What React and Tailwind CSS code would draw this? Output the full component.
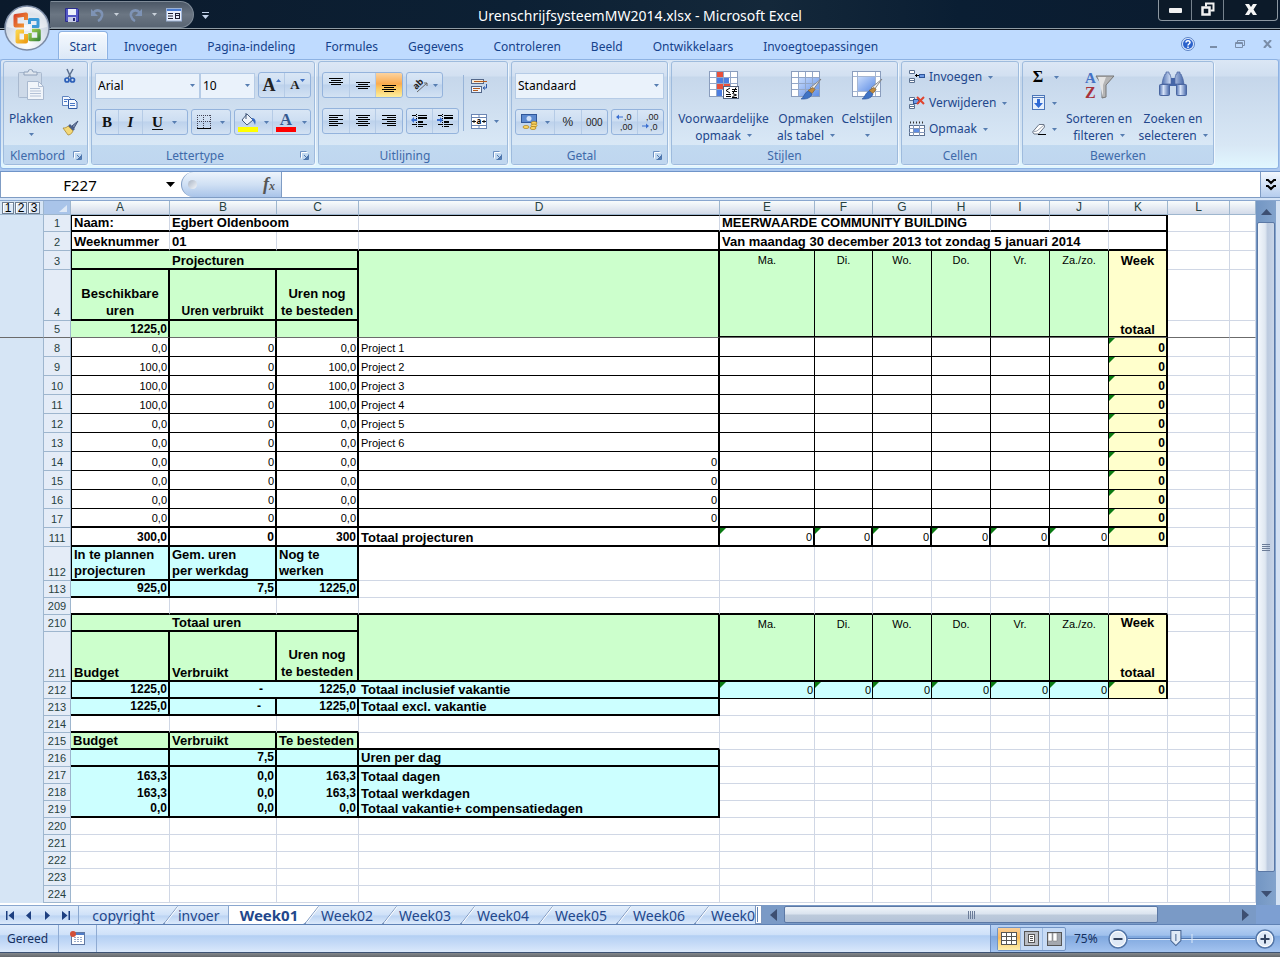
import React from 'react';

/* ---------- small shared pieces ---------- */

const Arrow = ({ className = 'text-[#567db1]' }) => (
  <svg width="5" height="3" viewBox="0 0 5 3" className={'shrink-0 ' + className} aria-hidden="true">
    <path d="M0 0h5L2.500 3z" fill="currentColor" />
  </svg>
);

const Launcher = ({ label }) => (
  <button aria-label={label} className="absolute right-1 top-1 flex h-3 w-3 items-center justify-center">
    <svg width="9" height="9" viewBox="0 0 9 9" aria-hidden="true">
      <path d="M.5 6.500V.5H6.500" fill="none" stroke="#6f92c2" />
      <path d="M1.500 7.500V1.500H7.500" fill="none" stroke="#fff" />
      <path d="M3.500 8.500H8.500V3.500M4 4l3.500 3.500M5 7.500h2.500V5" fill="none" stroke="#4d76ad" />
    </svg>
  </button>
);

function Group({ title, launcher, className, children }) {
  return (
    <section
      aria-label={title}
      className={'relative flex h-[104px] shrink-0 flex-col overflow-hidden rounded-[3px] border border-[#9ebbdd] bg-[linear-gradient(#dce7f5_0px,#d2e0f1_14px,#c6d7eb_15px,#d9e8f6_84px)] shadow-[1px_1px_0_#f0f7fd] ' + className}
    >
      <div className="flex-1">{children}</div>
      <div className="relative h-[19px] bg-[linear-gradient(#c1d9f0,#bfd6ef)] text-center text-[12px] leading-[22px] text-[#3e6aaa]">
        <span className={launcher ? 'mr-4' : ''}>{title}</span>
        {launcher && <Launcher label={title + ' opties'} />}
      </div>
    </section>
  );
}

const Bar = ({ className = '', children }) => (
  <div className={'flex h-[26px] divide-x divide-[#b5cbe6] overflow-hidden rounded-[3px] border border-[#94b3dc] bg-[linear-gradient(#d9e6f5_0%,#cddef2_45%,#bdd2ec_50%,#d3e2f3_100%)] ' + className}>
    {children}
  </div>
);

const Btn = ({ label, className = '', children }) => (
  <button aria-label={label} className={'flex flex-1 items-center justify-center ' + className}>
    {children}
  </button>
);

const Lines = ({ rows, y = 1 }) => (
  <svg width="14" height="14" viewBox="0 0 14 14" aria-hidden="true">
    {rows.map(([x, w], i) => (
      <rect key={i} x={x} y={y + i * 2} width={w} height="1" fill="#000" />
    ))}
  </svg>
);

const valign = [[0, 14], [2, 10], [0, 14], [2, 10]];

const Combo = ({ label, value, className }) => (
  <div className={'relative h-[26px] ' + className}>
    <select
      aria-label={label}
      defaultValue={value}
      className="h-full w-full appearance-none border border-[#b5cbe6] bg-[#eaf2fb] pl-[2px] text-[12px] text-black outline-none"
    >
      <option>{value}</option>
    </select>
    <span className="pointer-events-none absolute right-[5px] top-[12px]"><Arrow className="block text-[#567db1]" /></span>
  </div>
);

const Indent = ({ flip }) => (
  <svg width="17" height="14" viewBox="0 0 17 14" aria-hidden="true">
    <path d="M1 1.500h4M7 1.500h9M1 10.500h4M7 10.500h9M7 12.500h5" stroke="#000" />
    <path d="M7 4h9M7 8h5" stroke="#000" strokeWidth="2" />
    <path d="M5.500 0v14" stroke="#000" strokeDasharray="1 1" />
    {flip
      ? <path d="M0 5h3V3l3 3-3 3V7H0z" fill="#3b6fd0" />
      : <path d="M6 5H3V3L0 6l3 3V7h3z" fill="#3b6fd0" />}
  </svg>
);

const GridIcon = ({ kind }) => (
  <svg width="32" height="32" viewBox="0 0 32 32" aria-hidden="true">
    <defs>
      <linearGradient id={'cell' + kind} x1="0" y1="0" x2="1" y2="1">
        <stop offset="0" stopColor="#c6dafb" />
        <stop offset="1" stopColor="#5f8ee6" />
      </linearGradient>
    </defs>
    <rect x="1.500" y="2.500" width="28" height="25" fill="#fff" stroke="#8a9dbd" />
    {kind === 'table' && <rect x="9" y="9" width="20" height="18" fill="url(#celltable)" />}
    {kind === 'cond' && (
      <g>
        <rect x="9" y="3" width="6" height="6" fill="#e8503a" />
        <rect x="9" y="9" width="12" height="6" fill="#4d7ee0" />
        <rect x="9" y="15" width="13" height="6" fill="#e8503a" />
        <rect x="9" y="21" width="5" height="6" fill="#4d7ee0" />
      </g>
    )}
    {kind === 'style' ? (
      <g>
        <path d="M6.500 3v24M24.500 3v24M2 7.500h27M2 22.500h27" stroke="#a5b6d2" />
        <rect x="7" y="8" width="17" height="14" fill="url(#cellstyle)" />
      </g>
    ) : (
      <path d="M8.500 3v24M15.500 3v24M22.500 3v24M2 8.500h27M2 14.500h27M2 20.500h27" stroke="#93a7c8" />
    )}
    {kind === 'cond' ? (
      <g>
        <rect x="15.500" y="17.500" width="15" height="12" fill="#fff" stroke="#55657f" />
        <path d="M22 19l-4 2.500 4 2.500M18 25.500h5M18 27.500h5M24 20.500h5M24 22.500h5M28 18.500l-3 6M24.500 24.500l4 1.500-4 1.500M24 28.500h5" fill="none" stroke="#000" />
      </g>
    ) : (
      <g>
        <path d="M31 10l-8 11-3-2z" fill="#e9e9e9" stroke="#777" strokeWidth=".8" />
        <path d="M23 18.500l2 2-3 4-4-3z" fill="#c08a3e" stroke="#7a5520" strokeWidth=".6" />
        <path d="M18 22l4 3c-1 4-6 5.500-11 5 3-1.500 3-6 7-8z" fill="#3f73c4" stroke="#2a539a" strokeWidth=".6" />
      </g>
    )}
  </svg>
);

const BigButton = ({ icon, top, bottom, className }) => (
  <button className={'flex flex-col items-center pt-[7px] text-[12px] leading-[17px] text-[#22478c] ' + className}>
    <span className="flex h-8 items-center">{icon}</span>
    <span className="mt-[9px] whitespace-nowrap">{top}</span>
    <span className="flex h-[17px] items-center gap-[6px] whitespace-nowrap">
      {bottom}
      <Arrow />
    </span>
  </button>
);

/* ---------- title bar ---------- */

const OfficeOrb = () => (
  <button aria-label="Office-knop" className="absolute left-1 top-[5px] z-10 h-[46px] w-[46px]">
    <svg width="46" height="46" viewBox="0 0 46 46" aria-hidden="true">
      <defs>
        <radialGradient id="orb" cx=".5" cy=".85" r=".9">
          <stop offset="0" stopColor="#fff" />
          <stop offset=".45" stopColor="#dde5ef" />
          <stop offset=".75" stopColor="#c3cddb" />
          <stop offset="1" stopColor="#f3f6fa" />
        </radialGradient>
        <linearGradient id="orbRed" x1="0" y1="0" x2="1" y2="1"><stop offset="0" stopColor="#d8452a" /><stop offset="1" stopColor="#f39a35" /></linearGradient>
        <linearGradient id="orbYellow" x1="0" y1="0" x2="1" y2="1"><stop offset="0" stopColor="#fbd34a" /><stop offset="1" stopColor="#ee9f18" /></linearGradient>
        <linearGradient id="orbGreen" x1="0" y1="0" x2="1" y2="1"><stop offset="0" stopColor="#a4cf4c" /><stop offset="1" stopColor="#3f8a3a" /></linearGradient>
      </defs>
      <circle cx="23" cy="23" r="22" fill="url(#orb)" stroke="#7b8ba5" strokeWidth="1.500" />
      <path d="M3 22a20 20 0 0 1 40 0c-10 3-30 3-40 0z" fill="#fff" opacity=".45" />
      <g fill="none" strokeLinejoin="round">
        <path d="M20 20.500h-8.500V11L22 9.500V15" stroke="url(#orbRed)" strokeWidth="4" />
        <path d="M25.500 19v-4.500h8.500v7h-6" stroke="#3d9ad6" strokeWidth="3" />
        <path d="M20 26.500h-6.500v10H22V29" stroke="url(#orbYellow)" strokeWidth="4" />
        <path d="M28 25.500h7v9h-9V28" stroke="url(#orbGreen)" strokeWidth="3.500" />
      </g>
      <path d="M20 20h6v6h-6z" fill="#fff" opacity=".5" />
    </svg>
  </button>
);

function TitleBar() {
  return (
    <header className="relative flex h-[30px] items-start border-b border-[#0a1018] bg-[linear-gradient(90deg,#0b1a2c,#0c2034_40%,#14283a_60%,#0a1e33_75%,#0b1b2e)] shadow-[inset_0_-1px_0_#8f9ba3]">
      <OfficeOrb />
      <div className="ml-[50px] mt-[1px] flex h-[27px] w-[144px] items-center rounded-r-[14px] border border-[#7f8b98] border-l-transparent bg-[linear-gradient(#4c5867,#6b7683_50%,#596573)] pl-[13px]">
        <button aria-label="Opslaan">
          <svg width="16" height="16" viewBox="0 0 16 16" aria-hidden="true">
            <path d="M1.500 1.500h12l1 1v12h-13z" fill="#5458c6" stroke="#2c2f8c" />
            <rect x="4" y="2" width="8" height="6" fill="#eef2fb" />
            <rect x="4" y="10" width="8" height="5" fill="#c7cbe8" />
            <rect x="9" y="11" width="2" height="3" fill="#23256e" />
          </svg>
        </button>
        <button aria-label="Ongedaan maken" className="ml-[10px]">
          <svg width="14" height="14" viewBox="0 0 14 14" aria-hidden="true">
            <path d="M3 5c4-5 10-2 9 3-.5 2-2 4-4 5" fill="none" stroke="#7e93b5" strokeWidth="2.500" />
            <path d="M1 1v7h7z" fill="#7e93b5" />
          </svg>
        </button>
        <Arrow className="ml-[10px] text-[#c9d1da]" />
        <button aria-label="Opnieuw" className="ml-[10px]">
          <svg width="14" height="14" viewBox="0 0 14 14" aria-hidden="true">
            <path d="M11 5C7 0 1 3 2 8c.5 2 2 4 4 5" fill="none" stroke="#7e93b5" strokeWidth="2.500" />
            <path d="M13 1v7H6z" fill="#7e93b5" />
          </svg>
        </button>
        <Arrow className="ml-[9px] text-[#c9d1da]" />
        <button aria-label="Formulier" className="ml-[9px]">
          <svg width="16" height="14" viewBox="0 0 16 14" aria-hidden="true">
            <rect x=".5" y=".5" width="15" height="12.500" fill="#e9effa" stroke="#9db3d6" />
            <rect x="1" y="1" width="14" height="2" fill="#4a7bd0" />
            <path d="M2 5.500h5M2 8h5M2 10.500h5" stroke="#223" />
            <path d="M9 5.500h5M9 7.500h5M9 10.500h5M9.500 5v5M13.500 5v5" fill="none" stroke="#223" />
          </svg>
        </button>
      </div>
      <button aria-label="Werkbalk aanpassen" className="ml-[8px] mt-[12px]">
        <svg width="7" height="8" viewBox="0 0 7 8" aria-hidden="true">
          <path d="M0 .5h7" stroke="#c3d3ea" />
          <path d="M0 3h7L3.500 7z" fill="#c3d3ea" />
        </svg>
      </button>
      <h1 className="pointer-events-none absolute inset-x-0 top-[6px] text-center text-[14px] leading-[20px] text-white">
        UrenschrijfsysteemMW2014.xlsx - Microsoft Excel
      </h1>
      <div className="ml-auto mr-[2px] flex h-[21px] divide-x divide-[#76828d] rounded-b-[4px] border border-t-0 border-[#8c97a1] bg-[#0c1a29]">
        <button aria-label="Minimaliseren" className="flex w-[33px] items-center justify-center">
          <svg width="13" height="5" viewBox="0 0 13 5" aria-hidden="true"><rect width="13" height="5" rx="1" fill="#f2f2f2" /></svg>
        </button>
        <button aria-label="Verkleinen" className="flex w-[32px] items-center justify-center pb-[2px]">
          <svg width="14" height="14" viewBox="0 0 14 14" aria-hidden="true">
            <path d="M5 4.500V1.500h7.500v7H9.500" fill="none" stroke="#f2f2f2" strokeWidth="2" />
            <rect x="1.500" y="5.500" width="7" height="7" fill="none" stroke="#f2f2f2" strokeWidth="2.500" />
          </svg>
        </button>
        <button aria-label="Sluiten" className="flex w-[53px] items-center justify-center pb-[2px]">
          <svg width="12" height="11" viewBox="0 0 12 11" aria-hidden="true">
            <path d="M0 0h4l2 3 2-3h4L8.500 5.500 12 11H8L6 8l-2 3H0l3.500-5.500z" fill="#f5f5f5" />
          </svg>
        </button>
      </div>
    </header>
  );
}

/* ---------- ribbon ---------- */

const ribbonTabs = ['Invoegen', 'Pagina-indeling', 'Formules', 'Gegevens', 'Controleren', 'Beeld', 'Ontwikkelaars', 'Invoegtoepassingen'];

function RibbonTabs() {
  return (
    <nav className="flex h-[29px] items-end bg-[#bfdbff] pl-[58px] text-[12px] text-[#15428b]">
      <button className="mr-[1px] h-[28px] w-[50px] rounded-t-[4px] border border-b-0 border-[#8db2e3] bg-[linear-gradient(#f5f9fe,#dbe8f7)] pt-[3px] shadow-[inset_0_2px_2px_#fff]">
        Start
      </button>
      {ribbonTabs.map((t) => (
        <button key={t} className="h-[28px] px-[15px] pt-1">{t}</button>
      ))}
      <div className="mb-[8px] ml-auto mr-[8px] flex items-center">
        <button aria-label="Help">
          <svg width="14" height="14" viewBox="0 0 14 14" aria-hidden="true">
            <circle cx="7" cy="7" r="6.500" fill="#dceaff" stroke="#5c83c4" />
            <circle cx="7" cy="7" r="5" fill="#2b62cc" />
            <path d="M5 5.500c0-2.500 4-2.500 4 0 0 1.500-2 1.500-2 3M7 9.500v1.500" fill="none" stroke="#fff" strokeWidth="1.500" />
          </svg>
        </button>
        <button aria-label="Werkmap minimaliseren" className="ml-[15px]">
          <svg width="7" height="8" viewBox="0 0 7 8" aria-hidden="true"><rect y="6" width="7" height="2" fill="#7a8da8" /></svg>
        </button>
        <button aria-label="Werkmap verkleinen" className="ml-[18px]">
          <svg width="10" height="8" viewBox="0 0 10 8" aria-hidden="true">
            <path d="M2.500 2V.5h7v5H8" fill="none" stroke="#7a8da8" />
            <path d="M.5 2.500h7v5h-7zM.5 3.500h7" fill="none" stroke="#7a8da8" />
          </svg>
        </button>
        <button aria-label="Werkmap sluiten" className="ml-[18px]">
          <svg width="9" height="8" viewBox="0 0 9 8" aria-hidden="true">
            <path d="M1 0l7 8M8 0L1 8" stroke="#7a8da8" strokeWidth="2" />
          </svg>
        </button>
      </div>
    </nav>
  );
}

const CellRow = ({ icon, text }) => (
  <button className="flex h-[26px] items-center text-[12px] text-[#22478c]">
    <span className="mr-1 w-4">{icon}</span>
    {text}
    <Arrow className="ml-[6px] text-[#567db1]" />
  </button>
);

function Ribbon() {
  return (
    <div className="border-b border-[#6f94c8] bg-[#abc7ee] pb-[2px]">
      <div className="mr-[1px] flex h-[110px] gap-[3px] overflow-hidden rounded-[3px] border border-[#8db2e3] bg-[linear-gradient(#dbe7f5_0px,#d0dff0_16px,#c5d6ea_17px,#d8e7f5_85px,#e1f7ff_108px)] pl-[2px] pt-[1px]">
        <Group title="Klembord" launcher className="w-[85px]">
          <div className="flex">
            <button className="flex w-[54px] flex-col items-center pt-[7px] text-[12px] leading-[17px] text-[#22478c]">
              <svg width="28" height="32" viewBox="0 0 28 32" aria-hidden="true">
                <rect x="1.500" y="3.500" width="23" height="25" rx="1" fill="#cdd9e8" stroke="#a9b9cf" />
                <path d="M7 6V3h4a2.500 2.500 0 0 1 5 0h4v3z" fill="#dfe6ef" stroke="#8fa1ba" />
                <path d="M10.500 12.500h11l5 5v13h-16z" fill="#f1f5fa" stroke="#a9b9cf" />
                <path d="M21.500 12.500v5h5M13 19.500h10M13 22h11M13 24.500h11M13 27h11" fill="none" stroke="#b3c1d6" />
              </svg>
              <span className="mt-[9px]">Plakken</span>
              <span className="flex h-[14px] items-center"><Arrow /></span>
            </button>
            <div className="flex flex-col gap-[10px] pl-[4px] pt-[6px]">
              <button aria-label="Knippen">
                <svg width="16" height="16" viewBox="0 0 16 16" aria-hidden="true">
                  <path d="M5 1l4 9M11 1L6 10" stroke="#5b6f8f" strokeWidth="1.500" fill="none" />
                  <circle cx="5" cy="12" r="2" fill="none" stroke="#2c5fb8" strokeWidth="1.700" />
                  <circle cx="10.500" cy="12" r="2" fill="none" stroke="#2c5fb8" strokeWidth="1.700" />
                </svg>
              </button>
              <button aria-label="Kopiëren">
                <svg width="16" height="16" viewBox="0 0 16 16" aria-hidden="true">
                  <path d="M.5 2.500h6l2 2v7h-8z" fill="#f4f8ff" stroke="#5f83bd" />
                  <path d="M6.500 5.500h6l2.500 2.500v6.500h-8.500z" fill="#f4f8ff" stroke="#2f5aa6" />
                  <path d="M2 5.500h4M2 7.500h3M8 9.500h5M8 11.500h5" stroke="#4a78c6" />
                </svg>
              </button>
              <button aria-label="Opmaak kopiëren">
                <svg width="17" height="16" viewBox="0 0 17 16" aria-hidden="true">
                  <path d="M16 1l-6 5 2 2z" fill="#7a8db0" stroke="#43557a" />
                  <path d="M8 4l5 5-2 2-5-5z" fill="#4c5f88" />
                  <path d="M6 6l5 5c-1 3-4 4-5 4L1 8c2 0 4-.5 5-2z" fill="#f3d878" stroke="#a98a35" strokeWidth=".8" />
                </svg>
              </button>
            </div>
          </div>
        </Group>

        <Group title="Lettertype" launcher className="w-[224px]">
          <div className="flex flex-col gap-[11px] pl-[3px] pt-[10px]">
            <div className="flex">
              <Combo label="Lettertype" value="Arial" className="w-[105px]" />
              <Combo label="Tekengrootte" value="10" className="w-[55px]" />
              <Bar className="ml-[3px] w-[53px]">
                <Btn label="Lettertype vergroten" className="font-['Liberation_Serif',serif] text-[18px] font-bold text-[#222]">
                  A<span className="mb-[10px]"><svg width="5" height="3" viewBox="0 0 5 3"><path d="M0 3h5L2.500 0z" fill="#3f6fc0" /></svg></span>
                </Btn>
                <Btn label="Lettertype verkleinen" className="font-['Liberation_Serif',serif] text-[13px] font-bold text-[#222]">
                  A<span className="mb-[10px]"><Arrow className="text-[#3f6fc0]" /></span>
                </Btn>
              </Bar>
            </div>
            <div className="flex gap-[3px]">
              <Bar className="w-[93px] font-['Liberation_Serif',serif] text-[15px] text-[#111]">
                <Btn label="Vet" className="font-bold">B</Btn>
                <Btn label="Cursief" className="font-bold italic">I</Btn>
                <button className="flex flex-[2] items-center justify-evenly" aria-label="Onderstrepen">
                  <span className="font-bold underline underline-offset-2">U</span><Arrow />
                </button>
              </Bar>
              <Bar className="w-[40px]">
                <Btn label="Randen" className="gap-[9px]">
                  <svg width="14" height="14" viewBox="0 0 14 14" aria-hidden="true">
                    <path d="M0 .5h14M0 6.500h14M.5 0v13M6.500 0v13M13.500 0v13" stroke="#445" strokeDasharray="1 1" />
                    <path d="M0 13.500h14" stroke="#000" />
                  </svg>
                  <Arrow />
                </Btn>
              </Bar>
              <Bar className="w-[77px]">
                <Btn label="Opvulkleur" className="gap-[6px]">
                  <svg width="20" height="20" viewBox="0 0 20 20" aria-hidden="true">
                    <path d="M9 2l6 6-6 5-5-5z" fill="#eef3fa" stroke="#455a7c" />
                    <path d="M8 1v6" stroke="#455a7c" />
                    <path d="M14 6c4 0 4 4 3 7-1-3-2-4-3-5z" fill="#3a6cc2" />
                    <rect y="15" width="20" height="5" fill="#ff0" />
                  </svg>
                  <Arrow />
                </Btn>
                <Btn label="Tekstkleur" className="gap-[6px]">
                  <span className="flex h-5 w-5 flex-col items-center border-b-[5px] border-[#f00] font-['Liberation_Serif',serif] text-[17px] font-bold leading-[15px] text-[#35588f]">A</span>
                  <Arrow />
                </Btn>
              </Bar>
            </div>
          </div>
        </Group>

        <Group title="Uitlijning" launcher className="w-[190px]">
          <div className="flex pl-[3px] pt-[10px]">
            <div className="flex flex-col gap-[10px]">
              <div className="flex gap-[3px]">
                <Bar className="w-[81px]">
                  <Btn label="Boven uitlijnen"><Lines rows={valign} y={0} /></Btn>
                  <Btn label="Centreren in cel"><Lines rows={valign} y={4} /></Btn>
                  <Btn label="Onder uitlijnen" className="bg-[linear-gradient(#fbd3a0,#fbab4e_45%,#fbc55c_60%,#fdee9f)]"><Lines rows={valign} y={7} /></Btn>
                </Bar>
                <Bar className="w-[37px]">
                  <Btn label="Afdrukstand" className="gap-[4px]">
                    <svg width="18" height="18" viewBox="0 0 18 18" aria-hidden="true">
                      <text x="2" y="12" transform="rotate(-45 6 9)" fontFamily="Noto Sans, sans-serif" fontSize="9" fontWeight="bold" fill="#222">ab</text>
                      <path d="M6 16l10-9M16 7h-3M16 7v3" fill="none" stroke="#666" />
                    </svg>
                    <Arrow />
                  </Btn>
                </Bar>
              </div>
              <div className="flex gap-[3px]">
                <Bar className="w-[81px]">
                  <Btn label="Links uitlijnen"><Lines rows={[[0, 14], [0, 9], [0, 14], [0, 9], [0, 14], [0, 9]]} /></Btn>
                  <Btn label="Centreren"><Lines rows={[[0, 14], [2, 10], [0, 14], [2, 10], [0, 14], [2, 10]]} /></Btn>
                  <Btn label="Rechts uitlijnen"><Lines rows={[[0, 14], [5, 9], [0, 14], [5, 9], [0, 14], [5, 9]]} /></Btn>
                </Bar>
                <Bar className="w-[53px]">
                  <Btn label="Inspringing verkleinen"><Indent /></Btn>
                  <Btn label="Inspringing vergroten"><Indent flip /></Btn>
                </Bar>
              </div>
            </div>
            <div className="ml-[4px] mt-[3px] h-[56px] border-l border-[#98b4d8]" />
            <div className="ml-[7px] flex flex-col gap-[20px] pt-[6px]">
              <button aria-label="Terugloop">
                <svg width="17" height="16" viewBox="0 0 17 16" aria-hidden="true">
                  <rect x=".5" y="1.500" width="12" height="4" fill="#f5ead8" stroke="#54688a" />
                  <path d="M3 3.500h13" stroke="#b35a1d" />
                  <rect x=".5" y="8.500" width="10" height="6" fill="#eef3fb" stroke="#54688a" />
                  <path d="M2 10.500h7M2 12.500h5" stroke="#b35a1d" />
                  <path d="M15.500 6v4h-3M14 8.500L12 10l2 1.500" fill="none" stroke="#2c58a8" />
                </svg>
              </button>
              <button aria-label="Samenvoegen en centreren" className="flex items-center gap-[7px]">
                <svg width="16" height="15" viewBox="0 0 16 15" aria-hidden="true">
                  <rect x=".5" y=".5" width="15" height="14" fill="#fff" stroke="#6b86b4" />
                  <path d="M0 3.500h16M0 11.500h16M8 0v3M8 12v3" stroke="#6b86b4" />
                  <path d="M1 7.500h4M11 7.500h4M3 6v3M13 6v3" stroke="#111" />
                  <text x="5.500" y="10" fontSize="8" fontWeight="bold" fontFamily="Noto Sans, sans-serif">a</text>
                </svg>
                <Arrow />
              </button>
            </div>
          </div>
        </Group>

        <Group title="Getal" launcher className="w-[157px]">
          <div className="flex flex-col gap-[11px] pl-[3px] pt-[10px]">
            <Combo label="Getalnotatie" value="Standaard" className="w-[149px]" />
            <div className="flex gap-[3px]">
              <Bar className="w-[93px] text-[12px] text-[#222]">
                <button aria-label="Financiële notatie" className="flex flex-[3] items-center justify-center gap-[7px]">
                  <svg width="17" height="16" viewBox="0 0 17 16" aria-hidden="true">
                    <rect x=".5" y=".5" width="15" height="8" fill="#5d8ad0" stroke="#2f5699" />
                    <circle cx="8" cy="4.500" r="2.500" fill="#cfe0f8" />
                    <ellipse cx="13" cy="9" rx="3" ry="1.500" fill="#ffd766" stroke="#a37a14" strokeWidth=".7" />
                    <ellipse cx="13" cy="11.500" rx="3" ry="1.500" fill="#ffd766" stroke="#a37a14" strokeWidth=".7" />
                    <ellipse cx="12" cy="14" rx="3" ry="1.500" fill="#ffd766" stroke="#a37a14" strokeWidth=".7" />
                    <ellipse cx="5" cy="13" rx="3" ry="1.500" fill="#ffd766" stroke="#a37a14" strokeWidth=".7" />
                  </svg>
                  <Arrow />
                </button>
                <button className="flex-[2] font-['Liberation_Sans',Arial,sans-serif]">%</button>
                <button className="flex-[2] font-['Liberation_Sans',Arial,sans-serif] text-[10px]">000</button>
              </Bar>
              <Bar className="w-[53px]">
                <Btn label="Meer decimalen">
                  <svg width="18" height="20" viewBox="0 0 18 20" aria-hidden="true" fontFamily="Liberation Sans, Arial, sans-serif" fontSize="9" fill="#222">
                    <path d="M7 4.500H3v-2L0 5l3 2.500v-2h4z" fill="#3b6fd0" />
                    <text x="8" y="8">,0</text><text x="4" y="18">,00</text>
                  </svg>
                </Btn>
                <Btn label="Minder decimalen">
                  <svg width="18" height="20" viewBox="0 0 18 20" aria-hidden="true" fontFamily="Liberation Sans, Arial, sans-serif" fontSize="9" fill="#222">
                    <path d="M0 13.500h4v-2L7 14l-3 2.500v-2H0z" fill="#3b6fd0" />
                    <text x="4" y="8">,00</text><text x="8" y="18">,0</text>
                  </svg>
                </Btn>
              </Bar>
            </div>
          </div>
        </Group>

        <Group title="Stijlen" className="w-[227px]">
          <div className="flex gap-[2px] pl-[2px]">
            <BigButton className="w-[99px]" icon={<GridIcon kind="cond" />} top="Voorwaardelijke" bottom="opmaak" />
            <BigButton className="w-[62px]" icon={<GridIcon kind="table" />} top="Opmaken" bottom="als tabel" />
            <BigButton className="w-[56px]" icon={<GridIcon kind="style" />} top="Celstijlen" />
          </div>
        </Group>

        <Group title="Cellen" className="w-[118px]">
          <div className="flex flex-col items-start pl-[7px] pt-[2px]">
            <CellRow
              text="Invoegen"
              icon={
                <svg width="16" height="14" viewBox="0 0 16 14" aria-hidden="true">
                  <path d="M.5 .5h5v3h-5zM.5 8.500h5v4h-5zM.5 10.500h5" fill="#fff" stroke="#5b708f" />
                  <rect x="10.500" y="4.500" width="5" height="3" fill="#6e9ae6" stroke="#2f5699" />
                  <path d="M6 5.500h4M7.500 4v3" stroke="#000" />
                </svg>
              }
            />
            <CellRow
              text="Verwijderen"
              icon={
                <svg width="16" height="14" viewBox="0 0 16 14" aria-hidden="true">
                  <path d="M.5 1.500h5v3h-5zM.5 8.500h5v4h-5zM.5 10.500h5" fill="#fff" stroke="#5b708f" />
                  <rect x="4.500" y="3.500" width="5" height="4" fill="#6e9ae6" stroke="#2f5699" />
                  <path d="M8 1l7 7M15 1L8 8" stroke="#e0442e" strokeWidth="2" />
                </svg>
              }
            />
            <CellRow
              text="Opmaak"
              icon={
                <svg width="16" height="16" viewBox="0 0 16 16" aria-hidden="true">
                  <path d="M1 1.500h13" stroke="#333" strokeDasharray="1 2" strokeWidth="2" />
                  <rect x=".5" y="4.500" width="15" height="10" fill="#fff" stroke="#5b708f" />
                  <path d="M4.500 4v11M10.500 4v11M0 7.500h16M0 11.500h16" stroke="#8296b8" />
                  <rect x="5" y="8" width="5" height="3" fill="#5f8ee6" />
                </svg>
              }
            />
          </div>
        </Group>

        <Group title="Bewerken" className="w-[192px]">
          <div className="flex">
            <div className="flex w-[40px] flex-col pl-[9px] pt-[2px]">
              <button aria-label="AutoSom" className="flex h-[26px] items-center gap-[10px] font-['Liberation_Serif',serif] text-[16px] font-bold text-black">
                <span className="w-[12px]">Σ</span><Arrow />
              </button>
              <button aria-label="Doorvoeren" className="flex h-[26px] items-center gap-[6px]">
                <svg width="14" height="16" viewBox="0 0 14 16" aria-hidden="true">
                  <rect x=".5" y=".5" width="12" height="14" fill="#e6effc" stroke="#4c76b8" />
                  <path d="M1 2.500h11" stroke="#4c76b8" />
                  <path d="M5 4h3v4h3l-4.500 5L2 8h3z" fill="#2f6ad6" />
                </svg>
                <Arrow />
              </button>
              <button aria-label="Wissen" className="flex h-[26px] items-center gap-[6px]">
                <svg width="14" height="13" viewBox="0 0 14 13" aria-hidden="true">
                  <path d="M.5 9L7 1.500h5L12.500 4 6.500 11H2z" fill="#fff" stroke="#6b7687" />
                  <path d="M.5 9L5 8l7-6" fill="none" stroke="#9aa5b5" />
                  <path d="M6 11.500h8" stroke="#000" />
                </svg>
                <Arrow />
              </button>
            </div>
            <BigButton
              className="w-[72px]"
              top="Sorteren en"
              bottom="filteren"
              icon={
                <svg width="32" height="32" viewBox="0 0 32 32" aria-hidden="true">
                  <text x="2" y="14" fontFamily="Liberation Serif, serif" fontSize="15" fontWeight="bold" fill="#4472c4">A</text>
                  <text x="2" y="29" fontFamily="Liberation Serif, serif" fontSize="16" fontWeight="bold" fill="#a8323a">Z</text>
                  <path d="M13 7h18l-8 9v12l-4 1V16z" fill="#b5b5b5" stroke="#777" />
                  <path d="M15 8h8l-3 8v12z" fill="#e4e4e4" />
                </svg>
              }
            />
            <BigButton
              className="ml-[1px] w-[74px]"
              top="Zoeken en"
              bottom="selecteren"
              icon={
                <svg width="30" height="32" viewBox="0 0 30 32" aria-hidden="true">
                  <defs>
                    <linearGradient id="bino" x1="0" x2="1"><stop offset="0" stopColor="#4f70b0" /><stop offset=".4" stopColor="#d5e2f8" /><stop offset="1" stopColor="#4566a8" /></linearGradient>
                  </defs>
                  <rect x="11" y="9" width="8" height="8" fill="#4566a8" />
                  <path d="M8 3h3v2h1l1 4v6H4l1-5 2-5h1zM19 3h3v2h1l2 5 1 5h-9V9l1-4h1z" fill="url(#bino)" stroke="#4a66a0" strokeWidth=".7" />
                  <rect x="1.500" y="15.500" width="10" height="11" rx="1" fill="url(#bino)" stroke="#4a66a0" />
                  <rect x="18.500" y="15.500" width="10" height="11" rx="1" fill="url(#bino)" stroke="#4a66a0" />
                </svg>
              }
            />
          </div>
        </Group>
      </div>
    </div>
  );
}

/* ---------- formula bar ---------- */

function FormulaBar() {
  return (
    <div className="border-b border-[#8aa7cf] bg-[#d6e5f7] pb-[2px]">
      <div className="flex h-[26px] border-b border-[#7f9cc4] bg-white">
        <input aria-label="Naamvak" defaultValue="F227" className="w-[159px] border-l border-[#7f9cc4] text-center text-[15px] leading-5 text-black outline-none" />
        <button aria-label="Naam kiezen" className="flex w-[22px] items-center justify-center">
          <svg width="9" height="5" viewBox="0 0 9 5" aria-hidden="true"><path d="M0 0h9L4.500 5z" fill="#000" /></svg>
        </button>
        <div className="flex w-[101px] items-center justify-between rounded-l-[13px] border-l border-r border-[#7f9cc4] bg-[linear-gradient(#edf4fc,#d0e0f4_50%,#a9c4e9)] pl-[6px] pr-[6px]">
          <span className="h-[9px] w-[9px] rounded-full bg-[linear-gradient(135deg,#a9b4c4,#f4f7fb)]" />
          <button aria-label="Functie invoegen" className="font-['Liberation_Serif',serif] text-[18px] font-bold italic leading-[20px] text-[#555]">
            f<span className="text-[12px]">x</span>
          </button>
        </div>
        <input aria-label="Formulebalk" className="min-w-0 flex-1 px-2 text-[14px] outline-none" />
        <button aria-label="Formulebalk uitvouwen" className="flex w-[20px] items-center justify-center border-l border-[#7f9cc4] bg-[linear-gradient(#f3f8fe,#b5cdee)]">
          <svg width="10" height="12" viewBox="0 0 10 12" aria-hidden="true">
            <path d="M0 1h2l3 3 3-3h2M0 7h2l3 3 3-3h2" fill="none" stroke="#000" strokeWidth="2" />
          </svg>
        </button>
      </div>
    </div>
  );
}

/* ---------- worksheet ---------- */

const FILL = { w: 'bg-white', g: 'bg-[#ccffcc]', c: 'bg-[#ccffff]', y: 'bg-[#ffffcc]' };
const RIGHT = {
  g: 'border-r border-r-[#d0d7e5]',
  t: 'border-r border-r-black',
  k: 'border-r-2 border-r-black',
  n: 'border-r-0',
};
const BOTTOM = {
  g: 'border-b border-b-[#d0d7e5]',
  t: 'border-b border-b-black',
  k: 'border-b-2 border-b-black',
  f: 'border-b border-b-[#6b6b6b]',
  n: 'border-b-0',
};
const ALIGN = { l: 'text-left', r: 'text-right', c: 'text-center' };

/* text, fill, right border, bottom border, alignment, options */
const c = (text = '', fill = 'w', r = 'g', b = 'g', align = 'l', o = {}) => ({ text, fill, r, b, align, ...o });
const B = { bold: true };
const blanks = (n) => Array.from({ length: n }, () => c());
const times = (n, make) => Array.from({ length: n }, (_, i) => make(i));
const days = ['Ma.', 'Di.', 'Wo.', 'Do.', 'Vr.', 'Za./zo.'];

const projectRow = (label, a, cc, name, last) => {
  const b = last ? 'k' : 't';
  return [label, 19, [
    c(a, 'w', 'k', b, 'r', { left: true }), c('0', 'w', 'k', b, 'r'), c(cc, 'w', 'k', b, 'r'),
    name ? c(name, 'w', 'k', b) : c('0', 'w', 'k', b, 'r'),
    ...times(6, () => c('', 'w', 't', b)),
    c('0', 'y', 'k', b, 'r', { bold: true, flag: true }),
    c(), c(),
  ]];
};

const rows = [
  ['1', 17, [
    c('Naam:', 'w', 'g', 'k', 'l', { bold: true, left: true, top: true }),
    c('Egbert Oldenboom', 'w', 'g', 'k', 'l', { bold: true, span: 2, top: true }),
    c('', 'w', 'g', 'k', 'l', { top: true }),
    c('MEERWAARDE COMMUNITY BUILDING', 'w', 'g', 'k', 'l', { bold: true, span: 4, top: true }),
    c('', 'w', 'g', 'k', 'l', { top: true }), c('', 'w', 'g', 'k', 'l', { top: true }), c('', 'w', 'k', 'k', 'l', { top: true }),
    c(), c(),
  ]],
  ['2', 19, [
    c('Weeknummer', 'w', 'g', 'k', 'l', { bold: true, left: true }), c('01', 'w', 'g', 'k', 'l', B), c('', 'w', 'g', 'k'),
    c('', 'w', 'k', 'k'),
    c('Van maandag 30 december 2013 tot zondag 5 januari 2014', 'w', 'g', 'k', 'l', { bold: true, span: 6 }),
    c('', 'w', 'k', 'k'), c(), c(),
  ]],
  ['3', 19, [
    c('', 'g', 'n', 'k', 'l', { left: true }), c('Projecturen', 'g', 'k', 'k', 'l', { bold: true, span: 2 }),
    c('', 'g', 'k', 'f', 'l', { down: 3 }),
    ...days.map((d) => c(d, 'g', 't', 'f', 'c', { down: 3, head: true, rule: true })),
    c('Week', 'y', 'k', 'n', 'c', { bold: true, raise: true }), c(), c(),
  ]],
  ['4', 51, [
    c('Beschikbare\nuren', 'g', 'k', 'k', 'c', { bold: true, left: true }), c('Uren verbruikt', 'g', 'k', 'k', 'c', { bold: true, wide: true }),
    c('Uren nog\nte besteden', 'g', 'k', 'k', 'c', B), c('', 'y', 'k', 'n'), c(), c(),
  ]],
  ['5', 17, [
    c('1225,0', 'g', 'k', 'f', 'r', B), c('', 'g', 'k', 'f'), c('', 'g', 'k', 'f'),
    c('totaal', 'y', 'k', 'f', 'c', { bold: true, rule: true }), c('', 'w', 'g', 'f'), c('', 'w', 'g', 'f'),
  ]],
  projectRow('8', '0,0', '0,0', 'Project 1'),
  projectRow('9', '100,0', '100,0', 'Project 2'),
  projectRow('10', '100,0', '100,0', 'Project 3'),
  projectRow('11', '100,0', '100,0', 'Project 4'),
  projectRow('12', '0,0', '0,0', 'Project 5'),
  projectRow('13', '0,0', '0,0', 'Project 6'),
  projectRow('14', '0,0', '0,0'),
  projectRow('15', '0,0', '0,0'),
  projectRow('16', '0,0', '0,0'),
  projectRow('17', '0,0', '0,0', '', true),
  ['111', 19, [
    c('300,0', 'w', 'k', 'k', 'r', { bold: true, left: true }), c('0', 'w', 'k', 'k', 'r', B), c('300', 'w', 'k', 'k', 'r', B),
    c('Totaal projecturen', 'w', 'k', 'k', 'l', B),
    ...times(5, () => c('0', 'w', 'k', 'k', 'r', { flag: true })), c('0', 'w', 't', 'k', 'r', { flag: true }),
    c('0', 'y', 'k', 'k', 'r', { bold: true, flag: true }), c(), c(),
  ]],
  ['112', 34, [
    c('In te plannen\nprojecturen', 'c', 'k', 'k', 'l', { bold: true, left: true, tight: true }), c('Gem. uren\nper werkdag', 'c', 'k', 'k', 'l', { bold: true, tight: true }),
    c('Nog te\nwerken', 'c', 'k', 'k', 'l', { bold: true, tight: true }), ...blanks(9),
  ]],
  ['113', 17, [c('925,0', 'c', 'k', 'k', 'r', B), c('7,5', 'c', 'k', 'k', 'r', B), c('1225,0', 'c', 'k', 'k', 'r', B), ...blanks(9)]],
  ['209', 17, [...times(11, () => c('', 'w', 'g', 'k')), c()]],
  ['210', 17, [
    c('', 'g', 'n', 'k', 'l', { left: true }), c('Totaal uren', 'g', 'k', 'k', 'l', { bold: true, span: 2 }),
    c('', 'g', 'k', 'k', 'l', { down: 2 }),
    ...days.map((d) => c(d, 'g', 't', 'k', 'c', { down: 2, head: true })),
    c('Week', 'y', 'k', 'n', 'c', { bold: true, raise: true }), c(), c(),
  ]],
  ['211', 50, [
    c('Budget', 'g', 'k', 'k', 'l', { bold: true, left: true }), c('Verbruikt', 'g', 'k', 'k', 'l', B),
    c('Uren nog\nte besteden', 'g', 'k', 'k', 'c', B), c('totaal', 'y', 'k', 'k', 'c', B), c(), c(),
  ]],
  ['212', 17, [
    c('1225,0', 'c', 'k', 'k', 'r', { bold: true, left: true }), c('-', 'c', 'n', 'k', 'r', { bold: true, dash: true }), c('1225,0', 'c', 'n', 'k', 'r', { bold: true, gap: true }),
    c('Totaal inclusief vakantie', 'c', 'k', 'k', 'l', B),
    ...times(6, () => c('0', 'c', 't', 't', 'r', { flag: true })),
    c('0', 'y', 'k', 't', 'r', { bold: true, flag: true }), c(), c(),
  ]],
  ['213', 17, [
    c('1225,0', 'c', 'k', 'k', 'r', B), c('-', 'c', 'k', 'k', 'r', { bold: true, dash: true }), c('1225,0', 'c', 'k', 'k', 'r', B),
    c('Totaal excl. vakantie', 'c', 'k', 'k', 'l', B), ...blanks(8),
  ]],
  ['214', 17, [...times(3, () => c('', 'w', 'g', 'k')), ...blanks(9)]],
  ['215', 17, [
    c('Budget', 'g', 'k', 'k', 'l', B), c('Verbruikt', 'g', 'k', 'k', 'l', B), c('Te besteden', 'g', 'k', 'k', 'l', B),
    c('', 'w', 'g', 'k'), ...blanks(8),
  ]],
  ['216', 17, [
    c('', 'c', 'k', 'k'), c('7,5', 'c', 'k', 'k', 'r', B), c('', 'c', 'k', 'k'), c('Uren per dag', 'c', 'k', 'k', 'l', B), ...blanks(8),
  ]],
  ['217', 17, [
    c('163,3', 'c', 'k', 'n', 'r', B), c('0,0', 'c', 'k', 'n', 'r', B), c('163,3', 'c', 'k', 'n', 'r', B), c('Totaal dagen', 'c', 'k', 'n', 'l', B), ...blanks(8),
  ]],
  ['218', 17, [
    c('163,3', 'c', 'k', 'n', 'r', B), c('0,0', 'c', 'k', 'n', 'r', B), c('163,3', 'c', 'k', 'n', 'r', B), c('Totaal werkdagen', 'c', 'k', 'n', 'l', B), ...blanks(8),
  ]],
  ['219', 17, [
    c('0,0', 'c', 'k', 'k', 'r', B), c('0,0', 'c', 'k', 'k', 'r', B), c('0,0', 'c', 'k', 'k', 'r', B), c('Totaal vakantie+ compensatiedagen', 'c', 'k', 'k', 'l', B), ...blanks(8),
  ]],
  ...['220', '221', '222', '223', '224'].map((n) => [n, 17, blanks(12)]),
];

/* fill every row out to all thirteen columns; cells merged from above already cover seven */
rows.forEach((r) => {
  const width = r[2].reduce((n, x) => n + (x.span || 1), 0);
  const covered = { 4: 7, 5: 7, 211: 7 }[r[0]] || 0;
  for (let i = width + covered; i < 13; i++) r[2].push(c());
});

const HEIGHT = { 17: 'h-[17px]', 19: 'h-[19px]', 34: 'h-[34px]', 50: 'h-[50px]', 51: 'h-[51px]' };

function Cell({ cell }) {
  const multi = cell.text.includes('\n');
  const number = cell.align === 'r';
  const padLeft = cell.align === 'l' ? 'pl-[2px]' : '';
  const padRight = cell.dash ? 'pr-[14px]' : cell.gap ? 'pr-[3px]' : number ? 'pr-[1px]' : '';
  const size = !cell.bold ? 'text-[11px]' : number || cell.wide ? 'text-[12px]' : 'text-[13px]';
  const cls = [
    'relative whitespace-pre',
    padLeft, padRight, size,
    FILL[cell.fill], RIGHT[cell.r], BOTTOM[cell.b], ALIGN[cell.align],
    cell.head ? 'pt-[2px] align-top' : 'align-bottom',
    cell.rule ? 'shadow-[inset_0_-1px_0_#000]' : '',
    cell.raise ? 'pb-[2px]' : '',
    cell.left ? 'border-l border-l-black' : '',
    cell.top ? 'border-t border-t-black' : '',
    cell.bold ? 'font-bold' : 'font-normal',
    multi ? (cell.tight ? 'leading-[16px]' : 'leading-[17px]') : cell.top ? 'leading-[14px]' : 'leading-[15px]',
  ].join(' ');
  return (
    <td className={cls} colSpan={cell.span} rowSpan={cell.down}>
      {cell.flag && (
        <svg width="6" height="6" viewBox="0 0 6 6" className="absolute left-0 top-0" aria-hidden="true">
          <path d="M0 0h6L0 6z" fill="#0a7a12" />
        </svg>
      )}
      {cell.text}
    </td>
  );
}

const colHead = 'h-[14px] border-b border-r border-[#9eb6ce] bg-[linear-gradient(#f9fcfd,#d3dbe9)] p-0 text-[12px] font-normal leading-[13px] text-[#27413e]';

function Sheet() {
  return (
    <div className="min-w-0 flex-1 overflow-hidden bg-white">
      <table className="w-full table-fixed border-separate border-spacing-0 font-['Liberation_Sans',Arial,sans-serif] text-black">
        <colgroup>
          <col className="w-[44px]" /><col className="w-[27px]" /><col className="w-[99px]" /><col className="w-[107px]" />
          <col className="w-[82px]" /><col className="w-[361px]" /><col className="w-[95px]" /><col className="w-[58px]" />
          <col className="w-[59px]" /><col className="w-[59px]" /><col className="w-[59px]" /><col className="w-[59px]" />
          <col className="w-[59px]" /><col className="w-[62px]" /><col />
        </colgroup>
        <thead>
          <tr>
            <td className="h-[14px] border-b border-r border-[#9eb6ce] bg-[#d6e5f5] p-0 pl-[2px]">
              <div className="flex gap-[1px]">
                {['1', '2', '3'].map((n) => (
                  <button key={n} className="h-[12px] w-[12px] border border-[#6f7f93] bg-[#dfeaf7] text-[12px] leading-[11px] shadow-[inset_1px_1px_0_#fff]">{n}</button>
                ))}
              </div>
            </td>
            <td className="border-b border-r border-[#9eb6ce] bg-[#a9c4e9] p-0">
              <svg width="26" height="12" viewBox="0 0 26 12" className="block" aria-hidden="true"><path d="M23 3v7H15z" fill="#dfe9f6" /></svg>
            </td>
            {'ABCDEFGHIJKL'.split('').map((l) => <th key={l} scope="col" className={colHead}>{l}</th>)}
            <td className={colHead} />
          </tr>
        </thead>
        <tbody>
          {rows.map(([label, h, cells]) => (
            <tr key={label} className={HEIGHT[h]}>
              <td className={'border-r border-[#9eb6ce] bg-[#d6e5f5] p-0 ' + (label === '5' ? 'border-b border-b-[#6b6b6b]' : '')} />
              <th
                scope="row"
                className={'border-b border-r border-r-[#9eb6ce] bg-[#e4ecf7] p-0 align-bottom text-[11px] font-normal leading-[15px] text-[#27413e] ' + (label === '5' ? 'border-b-[#6b6b6b]' : 'border-b-[#9eb6ce]')}
              >
                {label}
              </th>
              {cells.map((cell, i) => <Cell key={i} cell={cell} />)}
            </tr>
          ))}
        </tbody>
      </table>
    </div>
  );
}

function VerticalScroll() {
  return (
    <div className="flex w-[24px] shrink-0 flex-col border-r-[4px] border-[#d3e1f3] bg-[linear-gradient(90deg,#7396c3,#83a3cc)]">
      <button aria-label="Omhoog" className="flex h-[21px] items-center justify-center">
        <svg width="11" height="6" viewBox="0 0 11 6" aria-hidden="true"><path d="M0 6h11L5.500 0z" fill="#3d4f72" /></svg>
      </button>
      <div className="mx-[1px] flex flex-1 flex-col items-center justify-center gap-[1px] rounded-[2px] border border-[#5b78a5] bg-[linear-gradient(90deg,#f3f7fc,#dfe7f1_45%,#bccadf_60%,#c9d6e8)]">
        {times(4, (i) => <span key={i} className="h-[1px] w-[8px] bg-[#6b7c98]" />)}
      </div>
      <button aria-label="Omlaag" className="flex h-[33px] items-center justify-center pt-[10px]">
        <svg width="11" height="6" viewBox="0 0 11 6" aria-hidden="true"><path d="M0 0h11L5.500 6z" fill="#3d4f72" /></svg>
      </button>
    </div>
  );
}

/* ---------- sheet tabs and horizontal scroll ---------- */

const Slash = ({ active }) => (
  <svg width="16" height="19" viewBox="0 0 16 19" className="shrink-0" aria-hidden="true">
    {active && <path d="M0 0h15.500L2 17H0z" fill="#fff" />}
    <path d="M15.500 .5L3 16.500l-2.500 2" fill="none" stroke="#7d97be" />
    <path d="M16.500 .5L4 16.500" fill="none" stroke="#fff" />
    <path d="M0 19l3-3v3z" fill="#7d97be" />
  </svg>
);

const NavArrow = ({ label, d, className }) => (
  <button aria-label={label} className={className}>
    <svg width="9" height="9" viewBox="0 0 9 9" aria-hidden="true"><path d={d} fill="#1d3f80" /></svg>
  </button>
);

function SheetTabs() {
  return (
    <div className="flex h-[20px] border-b border-[#5f82b5] bg-[#7a9ac6]">
      <div className="flex w-[755px] shrink-0 overflow-hidden border-t border-[#8aa7cf] bg-[linear-gradient(#e3eefb,#cfe1f8_50%,#bcd4f3_55%,#dceafb)] text-[14px] leading-[19px] text-[#22478c]">
        <div className="flex w-[79px] shrink-0 items-center border-r border-[#8aa7cf] pl-[6px]">
          <NavArrow label="Eerste blad" d="M0 0h1.500v9H0zM8 0v9L2.500 4.500z" />
          <NavArrow label="Vorig blad" d="M6 0v9L1 4.500z" className="ml-[10px]" />
          <NavArrow label="Volgend blad" d="M2 0v9l5-4.500z" className="ml-[9px]" />
          <NavArrow label="Laatste blad" d="M7.500 0H9v9H7.500zM1 0v9l5.500-4.500z" className="ml-[9px]" />
        </div>
        <button className="w-[83px] shrink-0 pl-[6px]">copyright</button>
        <Slash />
        <button className="w-[51px] shrink-0 border-r border-[#8aa7cf] text-left">invoer</button>
        <button className="w-[74px] shrink-0 bg-white pl-[6px] text-center text-[15px] font-bold">Week01</button>
        <Slash active />
        {['Week02', 'Week03', 'Week04', 'Week05', 'Week06', 'Week07'].map((t, i) => (
          <React.Fragment key={t}>
            {i > 0 && <Slash />}
            <button className="w-[62px] shrink-0 pl-[2px] text-left">{t}</button>
          </React.Fragment>
        ))}
      </div>
      <div className="w-[7px] shrink-0 border border-[#7d97be] bg-white p-[1px]"><div className="h-full w-[1px] bg-[#5f82b5]" /></div>
      <button aria-label="Naar links" className="flex w-[22px] shrink-0 items-center justify-center">
        <svg width="7" height="12" viewBox="0 0 7 12" aria-hidden="true"><path d="M7 0v12L0 6z" fill="#3d4f72" /></svg>
      </button>
      <div className="my-[1px] flex flex-[373] items-center justify-center gap-[1px] rounded-[2px] border border-[#5b78a5] bg-[linear-gradient(#eff4fa,#dbe4ef_45%,#bccadb_55%,#b4c3d8)]">
        {times(4, (i) => <span key={i} className="h-[8px] w-[1px] bg-[#6b7c98]" />)}
      </div>
      <div className="flex-[76]" />
      <button aria-label="Naar rechts" className="flex w-[22px] shrink-0 items-center justify-center">
        <svg width="7" height="12" viewBox="0 0 7 12" aria-hidden="true"><path d="M0 0v12l7-6z" fill="#3d4f72" /></svg>
      </button>
      <div className="w-[24px] shrink-0 bg-[#7d9fd2]" />
    </div>
  );
}

/* ---------- status bar ---------- */

const ZoomButton = ({ label, d }) => (
  <button aria-label={label} className="shrink-0">
    <svg width="20" height="20" viewBox="0 0 20 20" aria-hidden="true">
      <circle cx="10" cy="10" r="9" fill="#dfe9f6" stroke="#5577a8" strokeWidth="1.500" />
      <circle cx="10" cy="10" r="7.500" fill="none" stroke="#fff" />
      <path d={d} stroke="#33435f" strokeWidth="2" />
    </svg>
  </button>
);

function StatusBar() {
  return (
    <footer className="flex h-[28px] shrink-0 items-stretch border-b border-[#3d5374] bg-[linear-gradient(#dfecfc,#cfe1f9_35%,#b3cff3_40%,#c9ddf8_75%,#dbe9fb)] text-[12px] text-[#15305f]">
      <div className="flex w-[59px] items-center border-r border-[#8fabd3] pl-[7px] pt-[1px]">Gereed</div>
      <button aria-label="Macro opnemen" className="flex w-[38px] items-center justify-center border-r border-[#8fabd3]">
        <svg width="16" height="15" viewBox="0 0 16 15" aria-hidden="true">
          <rect x="1.500" y="1.500" width="13" height="12" fill="#fff" stroke="#6179a3" />
          <rect x="2" y="2" width="12" height="2" fill="#4f7cc8" />
          <path d="M4 6.500h9M4 8.500h9M4 10.500h9" stroke="#9aaccb" strokeDasharray="2 1" />
          <circle cx="3" cy="3" r="3" fill="#d2503a" />
        </svg>
      </button>
      <div className="ml-auto flex w-[290px] items-center border-l border-[#6d8fc2] bg-[linear-gradient(#b9d2f4,#9fc0ec_38%,#7fa8df_42%,#94b7e8_75%,#a4c4f0)] pl-[6px]">
        <div className="flex h-[24px] w-[69px] divide-x divide-[#9cb9df] rounded-[2px] border border-[#7193c4] bg-[#c7dbf5]">
          <Btn label="Normaal" className="bg-[linear-gradient(#f9cf9a,#fbb85a_45%,#fdd272_60%,#fdeeb0)]">
            <svg width="16" height="13" viewBox="0 0 16 13" aria-hidden="true">
              <rect x=".5" y=".5" width="15" height="12" fill="#fff" stroke="#555" />
              <path d="M5.500 0v13M10.500 0v13M0 4.500h16M0 8.500h16" stroke="#555" />
            </svg>
          </Btn>
          <Btn label="Pagina-indeling weergeven">
            <svg width="15" height="15" viewBox="0 0 15 15" aria-hidden="true">
              <rect x=".5" y=".5" width="14" height="14" fill="#b9bdc4" stroke="#555" />
              <rect x="4.500" y="3.500" width="6" height="8" fill="#fff" stroke="#555" />
              <path d="M6 5.500h3M6 7.500h3M6 9.500h3" stroke="#555" />
            </svg>
          </Btn>
          <Btn label="Pagina-eindevoorbeeld">
            <svg width="15" height="14" viewBox="0 0 15 14" aria-hidden="true">
              <rect x=".5" y=".5" width="14" height="13" fill="#a4a8ae" stroke="#555" />
              <path d="M1 1h4v8H1zM6 1h4v8H6z" fill="#fff" stroke="#777" strokeWidth=".5" />
            </svg>
          </Btn>
        </div>
        <span className="ml-[8px] w-[34px]">75%</span>
        <ZoomButton label="Uitzoomen" d="M5.500 10h9" />
        <div className="relative h-5 flex-1">
          <svg width="126" height="20" viewBox="0 0 126 20" className="h-full w-full" preserveAspectRatio="none" aria-hidden="true">
            <path d="M0 9.500h126" stroke="#4f74ac" /><path d="M0 10.500h126" stroke="#dce9fa" />
            <path d="M63.500 5v9" stroke="#dce9fa" />
            <path d="M42.500 1.500h10v10l-5 5-5-5z" fill="#dfe9f6" stroke="#43618f" />
            <path d="M47.500 5v7" stroke="#43618f" />
          </svg>
          <input type="range" aria-label="In- en uitzoomen" min="10" max="400" defaultValue="75" className="absolute inset-0 w-full opacity-0" />
        </div>
        <ZoomButton label="Inzoomen" d="M5.500 10h9M10 5.500v9" />
        <span className="w-[5px]" />
      </div>
    </footer>
  );
}

export default function App() {
  return (
    <div className="flex min-h-screen flex-col overflow-hidden bg-[#6d7278] font-['Noto_Sans','Open_Sans',sans-serif]">
      <TitleBar />
      <RibbonTabs />
      <Ribbon />
      <FormulaBar />
      <main className="flex flex-1 flex-col">
        <div className="flex flex-1">
          <Sheet />
          <VerticalScroll />
        </div>
        <SheetTabs />
      </main>
      <StatusBar />
      <div className="h-1 shrink-0 bg-[linear-gradient(#85898d,#64686c)]" />
    </div>
  );
}
